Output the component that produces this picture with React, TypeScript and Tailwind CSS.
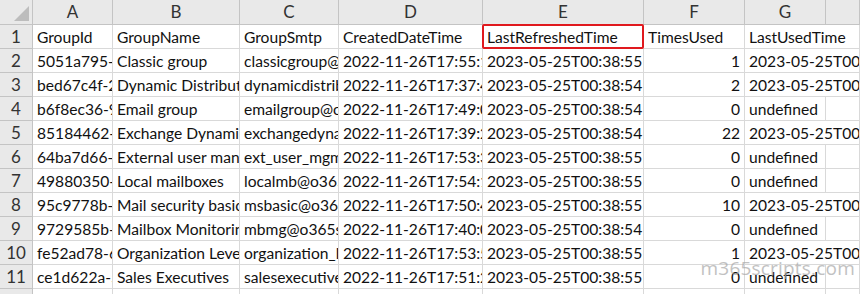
import React from "react";

const cols = ["A", "B", "C", "D", "E", "F", "G", ""];

const rows: string[][] = [
  ["GroupId", "GroupName", "GroupSmtp", "CreatedDateTime", "LastRefreshedTime", "TimesUsed", "LastUsedTime"],
  ["5051a795-3c2e-4a8b", "Classic group", "classicgroup@o365scripts.com", "2022-11-26T17:55:12", "2023-05-25T00:38:55", "1", "2023-05-25T00:38:55"],
  ["bed67c4f-2a1b-41c8", "Dynamic Distribution", "dynamicdistribution@o365", "2022-11-26T17:37:41", "2023-05-25T00:38:54", "2", "2023-05-25T00:38:54"],
  ["b6f8ec36-9d4e-4f02", "Email group", "emailgroup@o365scripts.com", "2022-11-26T17:49:08", "2023-05-25T00:38:54", "0", "undefined"],
  ["85184462-7c3a-4b9e", "Exchange Dynamic", "exchangedynamic@o365", "2022-11-26T17:39:27", "2023-05-25T00:38:54", "22", "2023-05-25T00:38:54"],
  ["64ba7d66-1e5f-4c3d", "External user management", "ext_user_mgmt@o365", "2022-11-26T17:53:33", "2023-05-25T00:38:55", "0", "undefined"],
  ["49880350-8b2c-4e7a", "Local mailboxes", "localmb@o365scripts.com", "2022-11-26T17:54:19", "2023-05-25T00:38:55", "0", "undefined"],
  ["95c9778b-4f6d-4a1c", "Mail security basic", "msbasic@o365scripts.com", "2022-11-26T17:50:46", "2023-05-25T00:38:55", "10", "2023-05-25T00:38:55"],
  ["9729585b-3a8e-4d5f", "Mailbox Monitoring", "mbmg@o365scripts.com", "2022-11-26T17:40:02", "2023-05-25T00:38:54", "0", "undefined"],
  ["fe52ad78-6c1b-4f9a", "Organization Level", "organization_level@o365", "2022-11-26T17:53:58", "2023-05-25T00:38:55", "1", "2023-05-25T00:38:55"],
  ["ce1d622a-5e3f-4b2d", "Sales Executives", "salesexecutives@o365", "2022-11-26T17:51:24", "2023-05-25T00:38:55", "0", "undefined"],
];

const cell = "h-[24px] border-r border-b border-[#d9d9d9] overflow-hidden whitespace-nowrap flex items-end pb-[1px] px-[4px]";

export default function App() {
  return (
    <div
      className="relative w-[860px] h-[294px] overflow-hidden bg-white text-[#111]"
      style={{ fontFamily: "Lato, 'Liberation Sans', sans-serif" }}
    >
      <div className="grid grid-cols-[33px_80px_127px_99px_144px_161px_101px_81px_34px] text-[15.6px] leading-[20px]">
        {/* corner */}
        <div className="relative h-[25px] bg-[#e9e9e9] border-r border-b border-[#c4c4c4]">
          <svg className="absolute right-[3px] bottom-[3px]" width="15" height="15" viewBox="0 0 15 15">
            <polygon points="15,0 15,15 0,15" fill="#bdbdbd" />
          </svg>
        </div>
        {cols.map((c, i) => (
          <div
            key={i}
            className="h-[25px] bg-[#e9e9e9] border-r border-b border-[#c4c4c4] flex items-center justify-center text-[#333] text-[17px]"
          >
            {c}
          </div>
        ))}
        {rows.map((r, ri) => {
          const longG = r[6].length > 9;
          return (
            <React.Fragment key={ri}>
              <div className="h-[24px] bg-[#e9e9e9] border-r border-b border-[#c4c4c4] flex items-center justify-center text-[#333] text-[17px]">
                {ri + 1}
              </div>
              {r.slice(0, 5).map((v, ci) => (
                <div key={ci} className={`${cell} ${ci === 4 && ri === 0 ? "relative overflow-visible" : ""}`}>
                  {v}
                  {ci === 4 && ri === 0 && (
                    <div className="absolute left-[-1px] top-[-1px] right-[-1px] bottom-[-1px] border-2 border-[#e0191e] rounded-[2px]" />
                  )}
                </div>
              ))}
              <div className={`${cell} ${ri === 0 ? "" : "justify-end"}`}>{r[5]}</div>
              {longG ? (
                <div className={`${cell} col-span-2`}>{r[6]}</div>
              ) : (
                <>
                  <div className={cell}>{r[6]}</div>
                  <div className={cell}></div>
                </>
              )}
            </React.Fragment>
          );
        })}
        <div className="h-[24px] bg-[#e9e9e9] border-r border-[#c4c4c4]" />
        {cols.map((_, i) => (
          <div key={i} className="h-[24px] border-r border-[#d9d9d9]" />
        ))}
      </div>
      <div
        className="absolute right-[5px] top-[254px] text-[19px] text-[#a8a8a8] opacity-70 tracking-[0.2px]"
        style={{ fontFamily: "'Open Sans', sans-serif" }}
      >
        m365scripts.com
      </div>
    </div>
  );
}
